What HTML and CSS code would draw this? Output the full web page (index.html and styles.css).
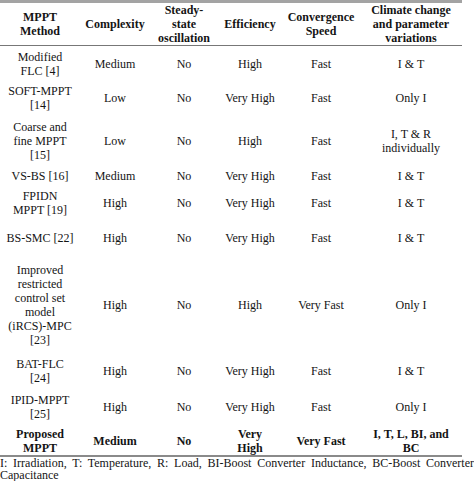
FILE: index.html
```html
<!DOCTYPE html>
<html>
<head>
<meta charset="utf-8">
<link rel="stylesheet" href="styles.css">
</head>
<body>
<div class="page">
<table class="cmp">
  <colgroup>
    <col class="c1"><col class="c2"><col class="c3"><col class="c4"><col class="c5"><col class="c6">
  </colgroup>
  <thead>
    <tr class="head">
      <th>MPPT<br>Method</th>
      <th>Complexity</th>
      <th>Steady-<br>state<br>oscillation</th>
      <th>Efficiency</th>
      <th>Convergence<br>Speed</th>
      <th>Climate change<br>and parameter<br>variations</th>
    </tr>
  </thead>
  <tbody>
    <tr class="r1"><td>Modified<br>FLC [4]</td><td>Medium</td><td>No</td><td>High</td><td>Fast</td><td>I &amp; T</td></tr>
    <tr class="r2"><td>SOFT-MPPT<br>[14]</td><td>Low</td><td>No</td><td>Very High</td><td>Fast</td><td>Only I</td></tr>
    <tr class="r3"><td>Coarse and<br>fine MPPT<br>[15]</td><td>Low</td><td>No</td><td>High</td><td>Fast</td><td>I, T &amp; R<br>individually</td></tr>
    <tr class="r4"><td>VS-BS [16]</td><td>Medium</td><td>No</td><td>Very High</td><td>Fast</td><td>I &amp; T</td></tr>
    <tr class="r5"><td>FPIDN<br>MPPT [19]</td><td>High</td><td>No</td><td>Very High</td><td>Fast</td><td>I &amp; T</td></tr>
    <tr class="r6"><td>BS-SMC [22]</td><td>High</td><td>No</td><td>Very High</td><td>Fast</td><td>I &amp; T</td></tr>
    <tr class="r7"><td>Improved<br>restricted<br>control set<br>model<br>(iRCS)-MPC<br>[23]</td><td>High</td><td>No</td><td>High</td><td>Very Fast</td><td>Only I</td></tr>
    <tr class="r8"><td>BAT-FLC<br>[24]</td><td>High</td><td>No</td><td>Very High</td><td>Fast</td><td>I &amp; T</td></tr>
    <tr class="r9"><td>IPID-MPPT<br>[25]</td><td>High</td><td>No</td><td>Very High</td><td>Fast</td><td>Only I</td></tr>
    <tr class="r10 bold"><td>Proposed<br>MPPT</td><td>Medium</td><td>No</td><td>Very<br>High</td><td>Very Fast</td><td>I, T, L, BI, and<br>BC</td></tr>
  </tbody>
</table>
<p class="note">I: Irradiation, T: Temperature, R: Load, BI-Boost Converter Inductance, BC-Boost Converter Capacitance</p>
</div>
</body>
</html>
```

FILE: styles.css
```css
html, body {
  margin: 0;
  padding: 0;
  background: #ffffff;
}
.page {
  width: 474px;
  font-family: "Liberation Serif", "Times New Roman", serif;
  font-size: 12px;
  color: #141414;
}
.cmp {
  width: 462px;
  table-layout: fixed;
  border-collapse: collapse;
  border-top: 3px solid #a3a3a3;
  border-bottom: 2px solid #8a8a8a;
}
.c1 { width: 80px; }
.c2 { width: 70px; }
.c3 { width: 68px; }
.c4 { width: 64px; }
.c5 { width: 78px; }
.c6 { width: 102px; }
.cmp th, .cmp td {
  padding: 0;
  text-align: center;
  vertical-align: middle;
  line-height: 14px;
}
.cmp th {
  font-weight: bold;
}
.head {
  height: 40px;
  border-bottom: 1px solid #777777;
}
.r1 { height: 36px; }
.r2 { height: 33px; }
.r3 { height: 52px; }
.r4 { height: 19px; }
.r5 { height: 35px; }
.r6 { height: 35px; }
.r7 { height: 99px; }
.r8 { height: 33px; }
.r9 { height: 39px; }
.r10 { height: 28px; }
.bold td { font-weight: bold; }
.note {
  margin: 0;
  width: 474px;
  text-align: justify;
  line-height: 12px;
}
```
